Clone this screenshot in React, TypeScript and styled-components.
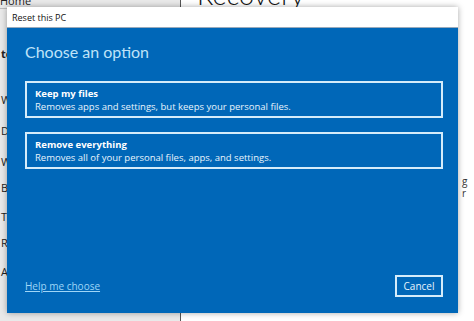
import React from "react";
import styled, { createGlobalStyle } from "styled-components";

const Global = createGlobalStyle`
  html, body { margin: 0; padding: 0; }
  body { font-family: "Open Sans", "Noto Sans", sans-serif; }
`;

const Screen = styled.div`
  position: relative;
  width: 474px;
  height: 321px;
  overflow: hidden;
  display: flex;
  background: #fff;
`;

const Sidebar = styled.div`
  width: 180px;
  background: #e9e9e9;
  border-right: 1px solid #555;
  display: flex;
  flex-direction: column;
  font-size: 11px;
  color: #222;
`;

const SideItem = styled.div<{ $top: number; $bold?: boolean }>`
  height: ${(p) => p.$top}px;
  display: flex;
  align-items: flex-end;
  padding-left: 1px;
  font-weight: ${(p) => (p.$bold ? 700 : 400)};
  white-space: nowrap;
  line-height: 14px;
`;

const HomeItem = styled.div`
  margin-top: -6px;
  padding-left: 0;
  font-size: 11px;
  line-height: 14px;
  border-bottom: 1px solid #bbb;
`;

const Main = styled.div`
  flex: 1;
  position: relative;
`;

const PageTitle = styled.div`
  margin-top: -20px;
  margin-left: 16px;
  font-size: 27px;
  line-height: 30px;
  font-weight: 300;
  color: #111;
  font-family: "Lato", "Open Sans", sans-serif;
`;

const RightText = styled.div`
  position: absolute;
  left: 281px;
  top: 175px;
  font-size: 10px;
  line-height: 12px;
  color: #333;
`;

const Dialog = styled.div`
  position: absolute;
  left: 7px;
  top: 7px;
  width: 451px;
  height: 306px;
  display: flex;
  flex-direction: column;
  box-shadow: 0 0 6px rgba(0, 0, 0, 0.35);
`;

const TitleBar = styled.div`
  height: 20px;
  background: #fff;
  border-bottom: 1px solid #9ab;
  display: flex;
  align-items: center;
  padding-left: 5px;
  font-size: 9px;
  color: #111;
`;

const Body = styled.div`
  flex: 1;
  background: #0067b8;
  display: flex;
  flex-direction: column;
  padding: 13px 15px 16px 18px;
`;

const Heading = styled.div`
  font-family: "Lato", "Open Sans", sans-serif;
  font-size: 16px;
  font-weight: 400;
  color: #bfe3f8;
  line-height: 22px;
  margin-bottom: 18px;
`;

const Option = styled.div`
  border: 2px solid #d5ecfa;
  height: 31px;
  padding: 1px 8px;
  display: flex;
  flex-direction: column;
  justify-content: center;
  margin-bottom: 14px;
  color: #fff;
`;

const OptTitle = styled.div`
  font-size: 9.5px;
  font-weight: 700;
  line-height: 13px;
`;

const OptDesc = styled.div`
  font-size: 9.5px;
  line-height: 13px;
  color: #e8f4fc;
`;

const Footer = styled.div`
  margin-top: auto;
  display: flex;
  align-items: flex-end;
  justify-content: space-between;
`;

const Link = styled.span`
  font-size: 10px;
  color: #9fd6f7;
  text-decoration: underline;
  margin-bottom: 4px;
`;

const CancelButton = styled.div`
  width: 44px;
  height: 18px;
  border: 2px solid #d5ecfa;
  display: flex;
  align-items: center;
  justify-content: center;
  color: #e8f4fc;
  font-size: 10px;
`;

export default function App() {
  return (
    <>
      <Global />
      <Screen>
        <Sidebar>
          <HomeItem>Home</HomeItem>
          <SideItem $top={52} $bold>te</SideItem>
          <SideItem $top={46}>W</SideItem>
          <SideItem $top={31}>D</SideItem>
          <SideItem $top={31}>W</SideItem>
          <SideItem $top={26}>Ba</SideItem>
          <SideItem $top={29}>Tr</SideItem>
          <SideItem $top={26}>Re</SideItem>
          <SideItem $top={29}>A</SideItem>
        </Sidebar>
        <Main>
          <PageTitle>Recovery</PageTitle>
          <RightText>g<br />r</RightText>
        </Main>
        <Dialog>
          <TitleBar>Reset this PC</TitleBar>
          <Body>
            <Heading>Choose an option</Heading>
            <Option>
              <OptTitle>Keep my files</OptTitle>
              <OptDesc>Removes apps and settings, but keeps your personal files.</OptDesc>
            </Option>
            <Option>
              <OptTitle>Remove everything</OptTitle>
              <OptDesc>Removes all of your personal files, apps, and settings.</OptDesc>
            </Option>
            <Footer>
              <Link>Help me choose</Link>
              <CancelButton>Cancel</CancelButton>
            </Footer>
          </Body>
        </Dialog>
      </Screen>
    </>
  );
}
